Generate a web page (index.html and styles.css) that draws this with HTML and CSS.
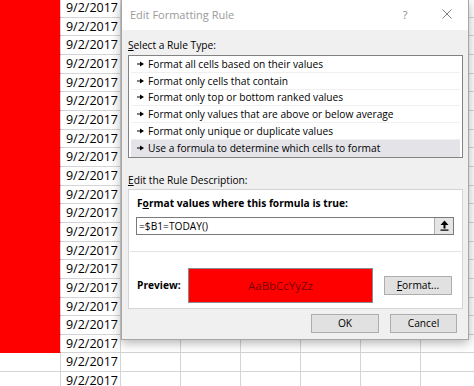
FILE: index.html
```html
<!DOCTYPE html>
<html>
<head>
	<title>Edit Formatting Rule</title>
	<meta charset="utf-8">
	<link rel="stylesheet" href="styles.css">
</head>
<body>
<div class="sheet">
	<div class="row"><div class="cell a red"></div><div class="cell b">9/2/2017</div><div class="rest"></div></div>
	<div class="row"><div class="cell a red"></div><div class="cell b">9/2/2017</div><div class="rest"></div></div>
	<div class="row"><div class="cell a red"></div><div class="cell b">9/2/2017</div><div class="rest"></div></div>
	<div class="row"><div class="cell a red"></div><div class="cell b">9/2/2017</div><div class="rest"></div></div>
	<div class="row"><div class="cell a red"></div><div class="cell b">9/2/2017</div><div class="rest"></div></div>
	<div class="row"><div class="cell a red"></div><div class="cell b">9/2/2017</div><div class="rest"></div></div>
	<div class="row"><div class="cell a red"></div><div class="cell b">9/2/2017</div><div class="rest"></div></div>
	<div class="row"><div class="cell a red"></div><div class="cell b">9/2/2017</div><div class="rest"></div></div>
	<div class="row"><div class="cell a red"></div><div class="cell b">9/2/2017</div><div class="rest"></div></div>
	<div class="row"><div class="cell a red"></div><div class="cell b">9/2/2017</div><div class="rest"></div></div>
	<div class="row"><div class="cell a red"></div><div class="cell b">9/2/2017</div><div class="rest"></div></div>
	<div class="row"><div class="cell a red"></div><div class="cell b">9/2/2017</div><div class="rest"></div></div>
	<div class="row"><div class="cell a red"></div><div class="cell b">9/2/2017</div><div class="rest"></div></div>
	<div class="row"><div class="cell a red"></div><div class="cell b">9/2/2017</div><div class="rest"></div></div>
	<div class="row"><div class="cell a red"></div><div class="cell b">9/2/2017</div><div class="rest"></div></div>
	<div class="row"><div class="cell a red"></div><div class="cell b">9/2/2017</div><div class="rest"></div></div>
	<div class="row"><div class="cell a red"></div><div class="cell b">9/2/2017</div><div class="rest"></div></div>
	<div class="row"><div class="cell a red"></div><div class="cell b">9/2/2017</div><div class="rest"></div></div>
	<div class="row"><div class="cell a red"></div><div class="cell b">9/2/2017</div><div class="rest"></div></div>
	<div class="row"><div class="cell a"></div><div class="cell b">9/2/2017</div><div class="rest"></div></div>
	<div class="row"><div class="cell a"></div><div class="cell b">9/2/2017</div><div class="rest"></div></div>
</div>

<div class="dialog">
	<div class="titlebar">
		<span class="title">Edit Formatting Rule</span>
		<span class="help">?</span>
		<span class="close"><svg width="10" height="10" viewBox="0 0 10 10"><path d="M0.5 0.5L9.5 9.5M9.5 0.5L0.5 9.5" stroke="#808080" stroke-width="1" fill="none"/></svg></span>
	</div>
	<div class="body">
		<div class="label"><u>S</u>elect a Rule Type:</div>
		<ul class="rules">
			<li><svg class="arrow" width="7" height="6" viewBox="0 0 7 6"><path d="M0 2.5h3.5v1H0z M3 0.5L7 3L3 5.5z" fill="#000"/></svg>Format all cells based on their values</li>
			<li><svg class="arrow" width="7" height="6" viewBox="0 0 7 6"><path d="M0 2.5h3.5v1H0z M3 0.5L7 3L3 5.5z" fill="#000"/></svg>Format only cells that contain</li>
			<li><svg class="arrow" width="7" height="6" viewBox="0 0 7 6"><path d="M0 2.5h3.5v1H0z M3 0.5L7 3L3 5.5z" fill="#000"/></svg>Format only top or bottom ranked values</li>
			<li><svg class="arrow" width="7" height="6" viewBox="0 0 7 6"><path d="M0 2.5h3.5v1H0z M3 0.5L7 3L3 5.5z" fill="#000"/></svg>Format only values that are above or below average</li>
			<li><svg class="arrow" width="7" height="6" viewBox="0 0 7 6"><path d="M0 2.5h3.5v1H0z M3 0.5L7 3L3 5.5z" fill="#000"/></svg>Format only unique or duplicate values</li>
			<li class="selected"><svg class="arrow" width="7" height="6" viewBox="0 0 7 6"><path d="M0 2.5h3.5v1H0z M3 0.5L7 3L3 5.5z" fill="#000"/></svg>Use a formula to determine which cells to format</li>
		</ul>
		<div class="label desc-label"><u>E</u>dit the Rule Description:</div>
		<div class="panel">
			<div class="formula">
				<div class="strong formula-label">F<u>o</u>rmat values where this formula is true:</div>
				<div class="input">
					<span class="value">=$B1=TODAY()</span>
					<span class="ref"><svg width="9" height="11" viewBox="0 0 9 11"><path d="M4.5 0.5L8.5 5H5.5v3.5h-2V5H0.5z M0.5 9.5h8v1.2h-8z" fill="#000"/></svg></span>
				</div>
			</div>
			<div class="sep"></div>
			<div class="preview-row">
				<span class="strong preview-label">Preview:</span>
				<div class="preview">AaBbCcYyZz</div>
				<button class="btn btn-format"><u>F</u>ormat...</button>
			</div>
		</div>
		<div class="actions">
			<button class="btn btn-ok">OK</button>
			<button class="btn btn-cancel">Cancel</button>
		</div>
	</div>
</div>
</body>
</html>
```

FILE: styles.css
```css
*{
	padding: 0;
	margin: 0;
}
body{
	width: 474px;
	height: 386px;
	overflow: hidden;
	position: relative;
	background: #fff;
	font-family: "Open Sans", "Noto Sans", sans-serif;
	color: #000;
}

/* spreadsheet behind the dialog */
.sheet{
	margin-top: -1px;
}
.row{
	display: flex;
	height: 18.67px;
}
.cell{
	box-sizing: border-box;
	border-right: 1px solid #d4d4d4;
	border-bottom: 1px solid #d4d4d4;
}
.a{
	width: 61px;
}
.b{
	width: 60px;
	padding-right: 2px;
	text-align: right;
	font-size: 12.5px;
	line-height: 17.67px;
	color: #000;
}
.red{
	background: #ff0000;
	border-bottom-color: #ff0000;
}
.rest{
	flex: 1;
	box-sizing: border-box;
	border-bottom: 1px solid #d4d4d4;
	background: repeating-linear-gradient(to right, transparent 0 59px, #d4d4d4 59px 60px);
}

/* dialog */
.dialog{
	position: absolute;
	left: 121px;
	top: 0;
	width: 348px;
	height: 340px;
	box-sizing: border-box;
	border: 1px solid #a6a6a6;
	border-top: none;
	background: #f0f0f0;
	box-shadow: 0 3px 10px rgba(0,0,0,0.3);
	font-size: 10.2px;
}
.titlebar{
	height: 30px;
	box-sizing: border-box;
	padding: 0 0 2px 8px;
	background: #fff;
	display: flex;
	align-items: center;
}
.title{
	flex: 1;
	color: #9a9a9a;
	font-size: 11px;
}
.help{
	width: 10px;
	margin-right: 28px;
	text-align: center;
	color: #8a8a8a;
	font-size: 11px;
}
.close{
	width: 18px;
	margin-right: 12px;
	display: flex;
	justify-content: center;
}
.body{
	padding: 7px 5px 0 6px;
}
.label{
	height: 16px;
	line-height: 16px;
}
.desc-label{
	margin-top: 14px;
}
.rules{
	list-style: none;
	margin-top: 2px;
	background: #fff;
	border: 1px solid #828282;
}
.rules li{
	height: 16.8px;
	box-sizing: border-box;
	margin: 0 2px;
	padding-left: 6px;
	border-bottom: 1px solid #f0f0f0;
	display: flex;
	align-items: center;
}
.rules li.selected{
	background: #e3e3e8;
	border-bottom-color: #e3e3e8;
}
.arrow{
	margin-right: 4px;
}
.panel{
	margin-top: 1px;
	height: 120px;
	box-sizing: border-box;
	padding: 0 1px;
	background: #fff;
	border: 1px solid #d5d5d5;
}
.formula{
	height: 61px;
	box-sizing: border-box;
	padding: 5px 7px 0 6px;
}
.strong{
	font-weight: bold;
}
.formula-label{
	height: 16px;
	line-height: 16px;
	padding-left: 1px;
}
.input{
	margin-top: 6px;
	height: 18px;
	box-sizing: border-box;
	border: 1px solid #7a7a7a;
	display: flex;
	align-items: center;
}
.value{
	flex: 1;
	padding-left: 2px;
}
.ref{
	width: 19px;
	height: 16px;
	box-sizing: border-box;
	border-left: 1px solid #adadad;
	background: #e5e5e5;
	display: flex;
	align-items: center;
	justify-content: center;
}
.sep{
	height: 1px;
	background: #e3e3e3;
}
.preview-row{
	display: flex;
	align-items: center;
	padding: 16px 0 0 7px;
}
.preview-label{
	width: 51px;
}
.preview{
	width: 185px;
	height: 35px;
	box-sizing: border-box;
	background: #ff0000;
	border: 1px solid #8c8c8c;
	color: #7a0000;
	font-size: 11.5px;
	display: flex;
	align-items: center;
	justify-content: center;
}
.btn{
	height: 19px;
	box-sizing: border-box;
	background: #e1e1e1;
	border: 1px solid #adadad;
	font: inherit;
	color: #000;
}
.btn-format{
	width: 68px;
	margin-left: 11px;
}
.actions{
	display: flex;
	justify-content: flex-end;
	gap: 11px;
	margin-top: 5px;
	padding-right: 6px;
}
.btn-ok{
	width: 68px;
}
.btn-cancel{
	width: 67px;
}
```
